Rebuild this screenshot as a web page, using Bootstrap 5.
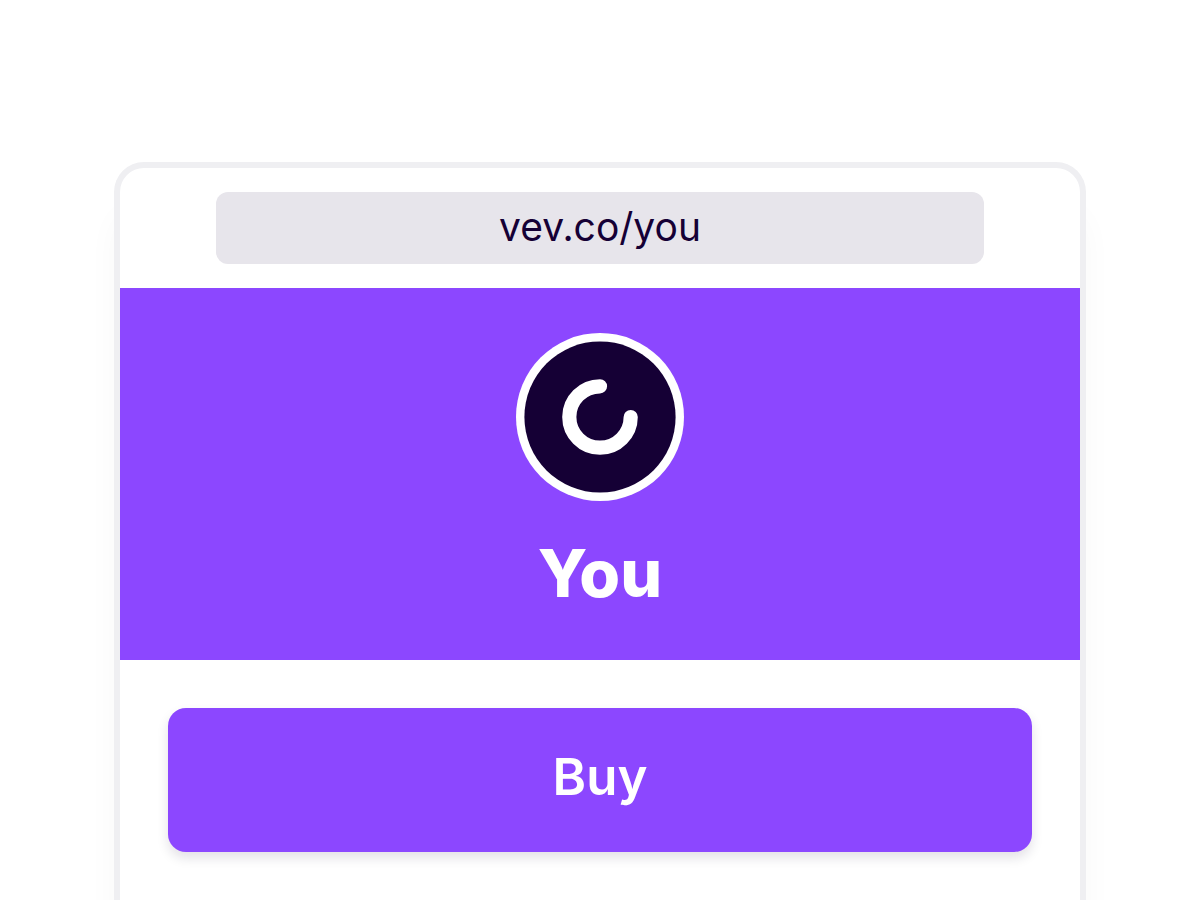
<!DOCTYPE html>
<html lang="en">
<head>
<meta charset="utf-8">
<meta name="viewport" content="width=device-width, initial-scale=1">
<title>vev.co/you</title>
<link href="https://cdn.jsdelivr.net/npm/bootstrap@5.3.0/dist/css/bootstrap.min.css" rel="stylesheet">
<style>
  body { font-family: Inter, sans-serif; color: #150035; background: #fff; }
  .stage { padding-top: 162px; overflow: hidden; height: 100vh; }
  .phone { width: 81%; border: 6px solid #efeff2; border-bottom: 0; border-radius: 30px 30px 0 0; box-shadow: 0 48px 32px rgba(21, 0, 53, .03); }
  .address { margin: 0 10%; border-radius: 12px; background: #e7e5eb; color: #150035; font-size: 39px; line-height: 70px; padding-bottom: 2px; }
  .hero { background: #8c47ff; padding: 45px 0; }
  .avatar { width: 168px; height: 168px; }
  .hero h1 { font-size: 66px; line-height: 84px; font-weight: 800; margin: 30px 0 0; }
  .buy { height: 144px; padding: 0 0 6px; border-radius: 18px; background: #8c47ff; color: #fff; font-size: 51px; font-weight: 600; box-shadow: 0 6px 12px rgba(21, 0, 53, .12); }
  .buy:hover { background: #7d39ee; color: #fff; }
</style>
</head>
<body>
<main class="stage d-flex">
  <section class="phone mx-auto bg-white flex-shrink-0">
    <div class="py-4">
      <a class="address d-block text-center text-decoration-none" href="#you">vev.co/you</a>
    </div>
    <header id="you" class="hero text-white text-center">
      <svg class="avatar d-block mx-auto" viewBox="0 0 168 168" aria-hidden="true">
        <circle cx="84" cy="84" r="84" fill="#fff"/>
        <circle cx="84" cy="84" r="75.6" fill="#150035"/>
        <path d="M84 53.3A30.7 30.7 0 1 0 114.700 84" fill="none" stroke="#fff" stroke-width="14.200" stroke-linecap="round"/>
      </svg>
      <h1>You</h1>
    </header>
    <div class="p-5">
      <button type="button" class="buy btn border-0 w-100">Buy</button>
    </div>
  </section>
</main>
<script src="https://cdn.jsdelivr.net/npm/bootstrap@5.3.0/dist/js/bootstrap.bundle.min.js"></script>
</body>
</html>
